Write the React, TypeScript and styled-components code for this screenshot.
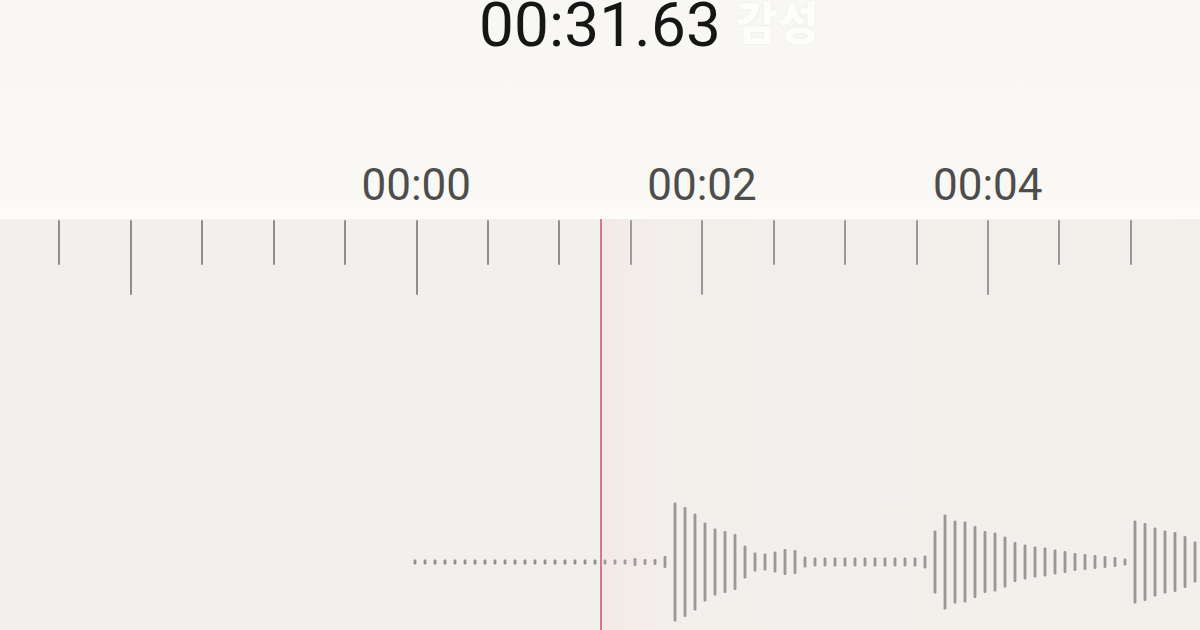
import styled, { createGlobalStyle } from "styled-components";

// ─── Data ─────────────────────────────────────────────────────────────────────

const TICK_STEP = 71.43; // px between ticks (0.5 s)
const TICK_COUNT = 16;
const LABEL_STEP = TICK_STEP * 4; // 2 s
const LABELS = ["00:00", "00:02", "00:04"];

const BAR_START = 415;
const BAR_STEP = 10;
const WAVE_CENTER = 262;

// amplitude of each bar, left → right
const BARS: number[] = [
  5, 5, 5, 5, 5, 5, 5, 5, 5, 5, 5, 5, 5, 5, 5, 5, 5, 5, 5, 5, 5, 5,
  8, 6, 6, 12,
  119, 110, 97, 79, 67, 62, 56, 33, 19, 17, 21, 26, 24,
  11, 9, 9, 9, 9, 9, 9, 9, 9, 9, 9, 9, 13,
  63, 95, 83, 81, 72, 62, 59, 51, 40, 35, 31, 29, 25, 22, 18, 16, 14, 12, 10, 7,
  83, 78, 69, 63, 60, 52, 41,
];

// ─── Styled Components ────────────────────────────────────────────────────────

const GlobalStyle = createGlobalStyle`
  html, body {
    margin: 0;
    padding: 0;
    background: #f2f0ec;
  }
  body {
    font-family: Roboto, "Noto Sans CJK KR", sans-serif;
  }
`;

const Screen = styled.div`
  position: relative;
  width: 1200px;
  height: 630px;
  overflow: hidden;
  display: flex;
  flex-direction: column;
  background: #f2f0ec;
`;

const Header = styled.header`
  height: 219px;
  box-sizing: border-box;
  padding-bottom: 12px;
  display: flex;
  flex-direction: column;
  justify-content: space-between;
  background: linear-gradient(180deg, #f8f7f4 0%, #f9f8f5 88%, #fdfcf8 100%);
`;

const TimerRow = styled.div`
  display: flex;
  justify-content: center;
  margin-top: -6px;
`;

const Timer = styled.div`
  position: relative;
  font-size: 62px;
  line-height: 62px;
  color: #161616;
  letter-spacing: 0.2px;
`;

const Watermark = styled.span`
  position: absolute;
  left: calc(100% + 15px);
  top: 2px;
  font-family: "Noto Sans CJK KR", sans-serif;
  font-weight: 900;
  font-size: 45px;
  line-height: 50px;
  white-space: nowrap;
  color: #fdfdfb;
  text-shadow: 0 0 3px rgba(0, 0, 0, 0.06);
`;

const LabelRow = styled.div`
  display: flex;
  padding-left: ${416.3 - LABEL_STEP / 2}px;
`;

const Label = styled.span`
  flex: 0 0 ${LABEL_STEP}px;
  text-align: center;
  font-size: 44px;
  line-height: 44px;
  color: #4d4d4d;
`;

const Ruler = styled.section`
  position: relative;
  flex: 1;
  display: flex;
  flex-direction: column;
`;

const TickRow = styled.div`
  height: 81px;
  display: flex;
  align-items: flex-start;
  padding-left: ${59.5 - TICK_STEP / 2}px;
`;

const TickCell = styled.div`
  flex: 0 0 ${TICK_STEP}px;
  display: flex;
  justify-content: center;
  padding-top: 1px;
`;

const Tick = styled.div<{ $major: boolean }>`
  width: 2px;
  height: ${(p) => (p.$major ? 75 : 45)}px;
  border-radius: 1px;
  background: #8e8e8e;
`;

const Wave = styled.svg`
  display: block;
  width: 1200px;
  height: 330px;
`;

const Tint = styled.div`
  position: absolute;
  left: 602px;
  top: 0;
  right: 0;
  bottom: 0;
  pointer-events: none;
  background: linear-gradient(
    90deg,
    rgba(246, 210, 214, 0.2) 0px,
    rgba(248, 228, 228, 0.12) 60px,
    rgba(248, 230, 228, 0.1) 100%
  );
`;

const Playhead = styled.div`
  position: absolute;
  left: 600px;
  top: 0;
  bottom: 0;
  width: 2px;
  background: #d4788a;
`;

// ─── Component ────────────────────────────────────────────────────────────────

export default function App() {
  return (
    <>
      <GlobalStyle />
      <Screen>
        <Header>
          <TimerRow>
            <Timer>
              00:31.63
              <Watermark>감성</Watermark>
            </Timer>
          </TimerRow>
          <LabelRow>
            {LABELS.map((l) => (
              <Label key={l}>{l}</Label>
            ))}
          </LabelRow>
        </Header>

        <Ruler>
          <Tint />
          <TickRow>
            {Array.from({ length: TICK_COUNT }, (_, i) => (
              <TickCell key={i}>
                <Tick $major={i % 4 === 1} />
              </TickCell>
            ))}
          </TickRow>
          <Wave viewBox="0 0 1200 330">
            {BARS.map((h, i) => (
              <rect
                key={i}
                x={BAR_START + i * BAR_STEP - 1.4}
                y={WAVE_CENTER - h / 2}
                width={2.8}
                height={h}
                rx={1.2}
                fill="#8d8d8d"
              />
            ))}
          </Wave>
          <Playhead />
        </Ruler>
      </Screen>
    </>
  );
}
